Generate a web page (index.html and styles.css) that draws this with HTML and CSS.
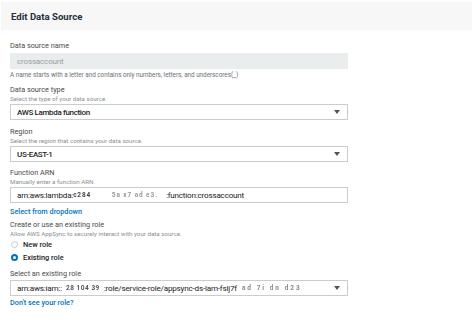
FILE: index.html
```html
<!DOCTYPE html>
<html>
<head>
<meta charset="utf-8">
<link rel="stylesheet" href="styles.css">
</head>
<body>
<div class="page">
  <div class="header"><h1 class="title">Edit Data Source</h1></div>
  <form class="form">
    <div class="field f1">
      <div class="label">Data source name</div>
      <div class="control disabled">crossaccount</div>
      <div class="hint">A name starts with a letter and contains only numbers, letters, and underscores(_)</div>
    </div>
    <div class="field f2">
      <div class="label">Data source type</div>
      <div class="desc">Select the type of your data source.</div>
      <div class="control select"><span class="val">AWS Lambda function</span><span class="arrow"></span></div>
    </div>
    <div class="field f3">
      <div class="label">Region</div>
      <div class="desc">Select the region that contains your data source.</div>
      <div class="control select"><span class="val">US-EAST-1</span><span class="arrow"></span></div>
    </div>
    <div class="field f4">
      <div class="label">Function ARN</div>
      <div class="desc">Manually enter a function ARN.</div>
      <div class="control"><span class="txt">arn:aws:lambda:</span><span class="mask m1">c 2 8 4</span><span class="mask m2">5a x7 ad e3.</span><span class="txt">:function:crossaccount</span></div>
      <a class="link l1">Select from dropdown</a>
    </div>
    <div class="field f5">
      <div class="label">Create or use an existing role</div>
      <div class="desc">Allow AWS AppSync to securely interact with your data source.</div>
      <div class="radio"><span class="dot"></span>New role</div>
      <div class="radio"><span class="dot on"></span>Existing role</div>
    </div>
    <div class="field f6">
      <div class="label">Select an existing role</div>
      <div class="control select"><span class="val2"><span class="txt">arn:aws:iam::</span><span class="mask m3">28 104 39</span><span class="txt">:role/service-role/appsync-ds-lam-fslj7f</span><span class="mask m4">ad 7i dn d23</span></span><span class="arrow"></span></div>
      <a class="link l2">Don't see your role?</a>
    </div>
  </form>
</div>
</body>
</html>
```

FILE: styles.css
```css
* { box-sizing: border-box; }
html, body { margin: 0; padding: 0; background: #fff; }
body {
  font-family: Roboto, "Noto Sans", sans-serif;
  color: #444;
  width: 474px;
  height: 326px;
  overflow: hidden;
}
.page { padding-top: 2px; }
.header {
  background: #f7f7f7;
  height: 28px;
  margin: 0 2px 0 1px;
  display: flex;
  align-items: center;
  padding-left: 10px;
}
.title {
  margin: 0;
  font-size: 9.6px;
  font-weight: 700;
  color: #232f3e;
}
.form {
  display: flex;
  flex-direction: column;
  padding: 0 10px;
}
.field { display: flex; flex-direction: column; }
.f1 { margin-top: 10px; }
.f2 { margin-top: 4px; }
.f3 { margin-top: 6px; }
.f4 { margin-top: 5px; }
.f5 { margin-top: 2px; }
.f6 { margin-top: 4px; }
.label {
  font-size: 7.3px;
  line-height: 11px;
  color: #4a4a4a;
}
.f1 .label { line-height: 12px; }
.desc {
  font-size: 6.2px;
  line-height: 8px;
  color: #8a8f94;
}
.hint {
  font-size: 6.3px;
  line-height: 9px;
  color: #6b6f74;
  margin-top: 2px;
}
.control {
  width: 338px;
  height: 16px;
  border: 1px solid #c8cdd0;
  margin-top: 1px;
  display: flex;
  align-items: center;
  padding-left: 6px;
  font-size: 8.1px;
  letter-spacing: -0.2px;
  color: #222;
  white-space: nowrap;
  overflow: hidden;
}
.disabled {
  background: #eaeded;
  border-color: #eaeded;
  color: #9aa0a4;
}
.select { justify-content: space-between; padding-right: 7px; }
.val { font-weight: 500; color: #1d1d1d; font-size: 8px; letter-spacing: -0.35px; }
.val2 { display: flex; align-items: center; }
.txt { flex: none; }
.arrow {
  width: 0; height: 0;
  border-left: 3px solid transparent;
  border-right: 3px solid transparent;
  border-top: 4px solid #555;
  flex: none;
}
.mask {
  flex: none;
  display: inline-block;
  filter: blur(0.7px);
  color: #666;
  font-size: 6.5px;
  font-weight: 700;
  white-space: nowrap;
}
.m1 { color: #444; letter-spacing: -0.4px; padding-right: 22px; }
.m2 { color: #999; letter-spacing: 0.9px; padding-right: 8px; }
.m3 { color: #555; letter-spacing: 0.5px; padding: 0 4px; }
.m4 { color: #888; letter-spacing: 2px; padding-left: 5px; }
.link {
  font-size: 7.3px;
  line-height: 11px;
  color: #0073bb;
  font-weight: 500;
  margin-top: 3px;
}
.l2 { margin-top: 1px; }
.radio {
  display: flex;
  align-items: center;
  height: 13px;
  font-size: 7.4px;
  color: #222;
  font-weight: 500;
}
.dot {
  width: 7px; height: 7px;
  border-radius: 50%;
  border: 1px solid #c6cacd;
  margin-left: 0.5px;
  margin-right: 5.5px;
  background: #fff;
}
.dot.on { border: 2.3px solid #0073bb; }
```
